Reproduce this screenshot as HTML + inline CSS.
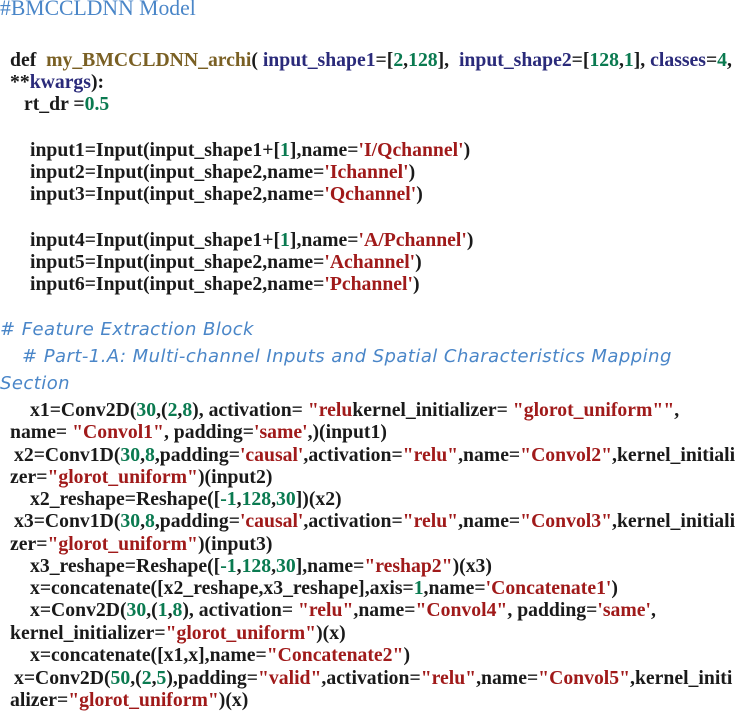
<!DOCTYPE html>
<html><head><meta charset="utf-8"><style>
body{margin:0;width:735px;height:716px;background:#fff;overflow:hidden;position:relative}
.l{position:absolute;white-space:pre;font:bold 19.7px/22px "Liberation Serif",serif;color:#1a1a1a}
.c{position:absolute;white-space:pre;font:italic 18px/22px "DejaVu Sans",sans-serif;letter-spacing:0.45px;color:#4a86c8}
.t{position:absolute;white-space:pre;font:21.7px/22px "Liberation Serif",serif;color:#4a86c8}
.f{color:#7a6024}.v{color:#2a2a7a}.n{color:#0a7a50}.s{color:#a01a1a}
</style></head><body>
<div class="t" style="left:0;top:-3px">#BMCCLDNN Model</div>
<div class="l" style="left:10px;top:49px">def  <span class="f">my_BMCCLDNN_archi</span>( <span class="v">input_shape1</span>=[<span class="n">2</span>,<span class="n">128</span>],  <span class="v">input_shape2</span>=[<span class="n">128</span>,<span class="n">1</span>], <span class="v">classes</span>=<span class="n">4</span>,</div>
<div class="l" style="left:10px;top:71px">**<span class="v">kwargs</span>):</div>
<div class="l" style="left:24px;top:93px">rt_dr =<span class="n">0.5</span></div>
<div class="l" style="left:30px;top:139px">input1=Input(input_shape1+[<span class="n">1</span>],name=<span class="s">'I/Qchannel'</span>)</div>
<div class="l" style="left:30px;top:161px">input2=Input(input_shape2,name=<span class="s">'Ichannel'</span>)</div>
<div class="l" style="left:30px;top:183px">input3=Input(input_shape2,name=<span class="s">'Qchannel'</span>)</div>
<div class="l" style="left:30px;top:229px">input4=Input(input_shape1+[<span class="n">1</span>],name=<span class="s">'A/Pchannel'</span>)</div>
<div class="l" style="left:30px;top:251px">input5=Input(input_shape2,name=<span class="s">'Achannel'</span>)</div>
<div class="l" style="left:30px;top:273px">input6=Input(input_shape2,name=<span class="s">'Pchannel'</span>)</div>
<div class="c" style="left:0;top:319px"># Feature Extraction Block</div>
<div class="c" style="left:22px;top:346px"># Part-1.A: Multi-channel Inputs and Spatial Characteristics Mapping</div>
<div class="c" style="left:0;top:373px">Section</div>
<div class="l" style="left:30px;top:399px">x1=Conv2D(<span class="n">30</span>,(<span class="n">2</span>,<span class="n">8</span>), activation= <span class="s">"relu</span>kernel_initializer= <span class="s">"glorot_uniform""</span>,</div>
<div class="l" style="left:10px;top:421px">name= <span class="s">"Convol1"</span>, padding=<span class="s">'same'</span>,)(input1)</div>
<div class="l" style="left:14px;top:444px">x2=Conv1D(<span class="n">30</span>,<span class="n">8</span>,padding=<span class="s">'causal'</span>,activation=<span class="s">"relu"</span>,name=<span class="s">"Convol2"</span>,kernel_initiali</div>
<div class="l" style="left:10px;top:466px">zer=<span class="s">"glorot_uniform"</span>)(input2)</div>
<div class="l" style="left:30px;top:488px">x2_reshape=Reshape([<span class="n">-1</span>,<span class="n">128</span>,<span class="n">30</span>])(x2)</div>
<div class="l" style="left:14px;top:510px">x3=Conv1D(<span class="n">30</span>,<span class="n">8</span>,padding=<span class="s">'causal'</span>,activation=<span class="s">"relu"</span>,name=<span class="s">"Convol3"</span>,kernel_initiali</div>
<div class="l" style="left:10px;top:533px">zer=<span class="s">"glorot_uniform"</span>)(input3)</div>
<div class="l" style="left:30px;top:555px">x3_reshape=Reshape([<span class="n">-1</span>,<span class="n">128</span>,<span class="n">30</span>],name=<span class="s">"reshap2"</span>)(x3)</div>
<div class="l" style="left:30px;top:577px">x=concatenate([x2_reshape,x3_reshape],axis=<span class="n">1</span>,name=<span class="s">'Concatenate1'</span>)</div>
<div class="l" style="left:30px;top:599px">x=Conv2D(<span class="n">30</span>,(<span class="n">1</span>,<span class="n">8</span>), activation= <span class="s">"relu"</span>,name=<span class="s">"Convol4"</span>, padding=<span class="s">'same'</span>,</div>
<div class="l" style="left:10px;top:622px">kernel_initializer=<span class="s">"glorot_uniform"</span>)(x)</div>
<div class="l" style="left:30px;top:644px">x=concatenate([x1,x],name=<span class="s">"Concatenate2"</span>)</div>
<div class="l" style="left:14px;top:667px">x=Conv2D(<span class="n">50</span>,(<span class="n">2</span>,<span class="n">5</span>),padding=<span class="s">"valid"</span>,activation=<span class="s">"relu"</span>,name=<span class="s">"Convol5"</span>,kernel_initi</div>
<div class="l" style="left:10px;top:689px">alizer=<span class="s">"glorot_uniform"</span>)(x)</div>
</body></html>
